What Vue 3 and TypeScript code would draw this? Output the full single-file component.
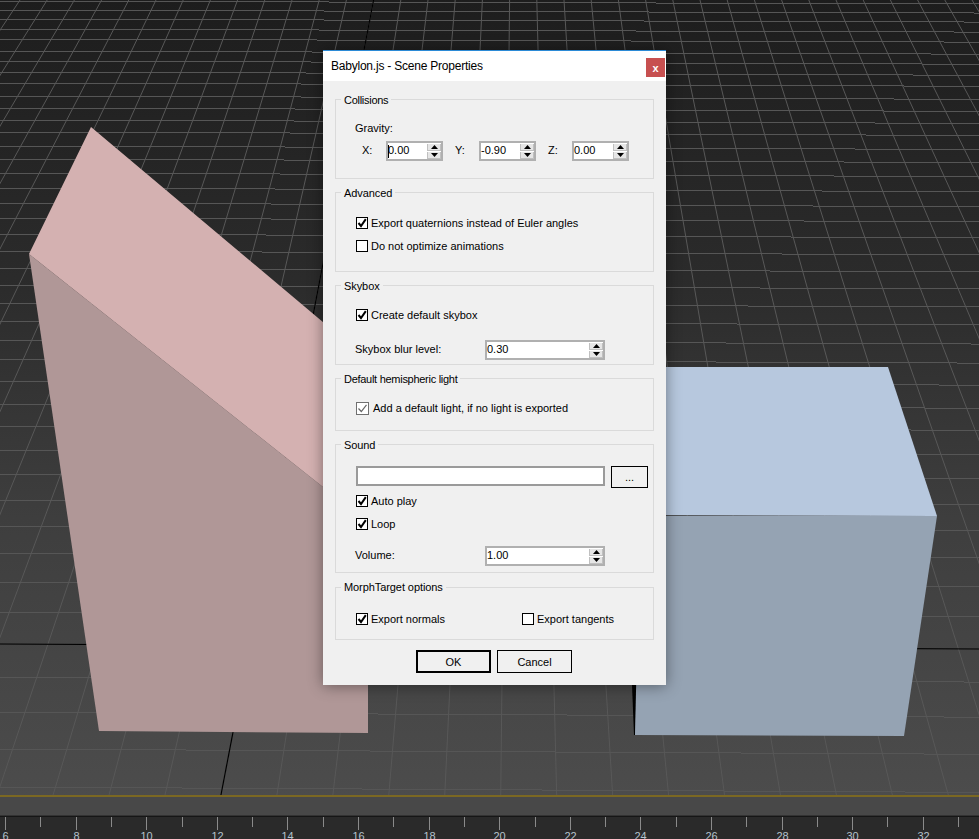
<script setup lang="ts">
const axes = [
  { label: 'X:', value: '0.00', caret: true },
  { label: 'Y:', value: '-0.90', caret: false },
  { label: 'Z:', value: '0.00', caret: false },
]

// viewport floor grid: everything runs to one vanishing point above the frame
const vpX = 518
const vpDepth = 752
const floorBottom = 795

const gridRays = Array.from({ length: 60 }, (_, i) => {
  const x0 = 20 + 27.2 * (i - 18)
  return { x1: x0, x2: vpX + ((x0 - vpX) * (floorBottom + vpDepth)) / vpDepth }
})

const rowYs = [
  1, 10, 19, 29, 39, 51, 61, 72, 83, 96, 108, 120, 132, 146, 159, 173, 188, 203, 218, 234, 251, 268,
  285, 303, 321, 340, 359, 381, 404, 426, 450, 474, 500, 526, 553, 582, 612, 677, 712, 749, 787,
]
const gridRows = rowYs.map((y) => ({ y1: y, y2: y + 3 + (2 * y) / 650 }))

const ticks = Array.from({ length: 28 }, (_, i) => ({
  x: Math.round(5 + 35.3 * i) + 0.5,
  major: i % 2 === 0,
  label: String(6 + i),
}))
</script>

<template>
  <div class="viewport">
    <svg class="scene" width="979" height="795" viewBox="0 0 979 795">
      <defs>
        <linearGradient id="floor" x1="0" y1="0" x2="0" y2="1">
          <stop offset="0" stop-color="#1d1d1d" />
          <stop offset="0.35" stop-color="#2b2b2b" />
          <stop offset="0.65" stop-color="#3e3e3e" />
          <stop offset="1" stop-color="#4c4c4c" />
        </linearGradient>
      </defs>
      <rect width="979" height="795" fill="url(#floor)" />
      <g stroke="#565656" stroke-width="1" shape-rendering="crispEdges">
        <line v-for="r in gridRows" :key="r.y1" x1="0" :y1="r.y1" x2="979" :y2="r.y2" />
      </g>
      <g stroke="#585858" stroke-width="1">
        <line v-for="r in gridRays" :key="r.x1" :x1="r.x1" y1="0" :x2="r.x2" :y2="floorBottom" />
      </g>
      <g stroke="#000" stroke-width="1.2">
        <line x1="0" y1="644" x2="979" y2="649" />
        <line x1="373.6" y1="0" :x2="vpX + ((373.6 - vpX) * (floorBottom + vpDepth)) / vpDepth" :y2="floorBottom" />
      </g>
      <polygon points="632,685 637,685 635,735 634,735" fill="#000" />
      <!-- pink wedge -->
      <polygon points="29,254 323,487 368,525 368,733 99,731" fill="#b09797" />
      <polygon points="91,127 29,254 323,487 368,525 368,360" fill="#d4b1b1" />
      <!-- blue box -->
      <polygon points="640,516 937,516 904,736 635,735" fill="#95a3b3" />
      <polygon points="640,367 888,367 937,516 640,515" fill="#b7c8de" />
    </svg>
    <div class="track"></div>
    <svg class="ruler" width="979" height="23" viewBox="0 0 979 23">
      <line x1="0" y1="0.5" x2="979" y2="0.5" stroke="#161616" />
      <g v-for="t in ticks" :key="t.x">
        <line :x1="t.x" y1="1" :x2="t.x" :y2="t.major ? 14 : 11" stroke="#8a8a8a" />
        <text v-if="t.major" :x="t.x" y="24" class="tick-label">{{ t.label }}</text>
      </g>
    </svg>

    <div class="dialog">
      <div class="titlebar">
        <span class="title">Babylon.js - Scene Properties</span>
        <button class="close">x</button>
      </div>
      <div class="body">
        <fieldset class="group collisions">
          <legend>Collisions</legend>
          <div class="gravity">Gravity:</div>
          <div class="axes">
            <div v-for="a in axes" :key="a.label" class="axis">
              <span class="axis-label">{{ a.label }}</span>
              <div class="number short">
                <span class="value"><i v-if="a.caret" class="caret"></i>{{ a.value }}</span>
                <div class="spin">
                  <span class="spin-btn"><svg width="7" height="4" viewBox="0 0 7 4"><path d="M3.5 0L7 4H0z" /></svg></span>
                  <span class="spin-btn"><svg width="7" height="4" viewBox="0 0 7 4"><path d="M0 0H7L3.5 4z" /></svg></span>
                </div>
              </div>
            </div>
          </div>
        </fieldset>

        <fieldset class="group advanced">
          <legend>Advanced</legend>
          <label class="check">
            <span class="box"><svg width="10" height="10" viewBox="0 0 10 10"><path d="M1.5 5L4 8L8.8 1.2" /></svg></span>
            Export quaternions instead of Euler angles
          </label>
          <label class="check second">
            <span class="box"></span>
            Do not optimize animations
          </label>
        </fieldset>

        <fieldset class="group skybox">
          <legend>Skybox</legend>
          <label class="check">
            <span class="box"><svg width="10" height="10" viewBox="0 0 10 10"><path d="M1.5 5L4 8L8.8 1.2" /></svg></span>
            Create default skybox
          </label>
          <div class="field-row blur">
            <span class="field-label">Skybox blur level:</span>
            <div class="number wide">
              <span class="value">0.30</span>
              <div class="spin">
                <span class="spin-btn"><svg width="7" height="4" viewBox="0 0 7 4"><path d="M3.5 0L7 4H0z" /></svg></span>
                <span class="spin-btn"><svg width="7" height="4" viewBox="0 0 7 4"><path d="M0 0H7L3.5 4z" /></svg></span>
              </div>
            </div>
          </div>
        </fieldset>

        <fieldset class="group hemi">
          <legend>Default hemispheric light</legend>
          <label class="check soft">
            <span class="box"><svg width="11" height="11" viewBox="0 0 11 11"><path d="M1.5 5.5L4.3 8.5L9.5 1.8" /></svg></span>
            Add a default light, if no light is exported
          </label>
        </fieldset>

        <fieldset class="group sound">
          <legend>Sound</legend>
          <div class="file-row">
            <div class="file-input"></div>
            <button class="browse">...</button>
          </div>
          <label class="check autoplay">
            <span class="box"><svg width="10" height="10" viewBox="0 0 10 10"><path d="M1.5 5L4 8L8.8 1.2" /></svg></span>
            Auto play
          </label>
          <label class="check second">
            <span class="box"><svg width="10" height="10" viewBox="0 0 10 10"><path d="M1.5 5L4 8L8.8 1.2" /></svg></span>
            Loop
          </label>
          <div class="field-row volume">
            <span class="field-label">Volume:</span>
            <div class="number wide">
              <span class="value">1.00</span>
              <div class="spin">
                <span class="spin-btn"><svg width="7" height="4" viewBox="0 0 7 4"><path d="M3.5 0L7 4H0z" /></svg></span>
                <span class="spin-btn"><svg width="7" height="4" viewBox="0 0 7 4"><path d="M0 0H7L3.5 4z" /></svg></span>
              </div>
            </div>
          </div>
        </fieldset>

        <fieldset class="group morph">
          <legend>MorphTarget options</legend>
          <div class="morph-row">
            <label class="check normals">
              <span class="box"><svg width="10" height="10" viewBox="0 0 10 10"><path d="M1.5 5L4 8L8.8 1.2" /></svg></span>
              Export normals
            </label>
            <label class="check">
              <span class="box"></span>
              Export tangents
            </label>
          </div>
        </fieldset>

        <div class="actions">
          <button class="btn default">OK</button>
          <button class="btn">Cancel</button>
        </div>
      </div>
    </div>
  </div>
</template>

<style scoped>
.viewport {
  position: relative;
  width: 979px;
  height: 839px;
  overflow: hidden;
  background: #2a2a2a;
}
.scene, .ruler { display: block; }
.track {
  height: 21px;
  box-sizing: border-box;
  background: #484848;
  border-top: 2px solid #7b6822;
  border-bottom: 1px solid #333;
}
.ruler { background: #2a2a2a; }
.tick-label {
  font-family: "Liberation Sans", Arial, sans-serif;
  font-size: 11px;
  fill: #b4c2cc;
  text-anchor: middle;
}

.dialog {
  position: absolute;
  left: 323px;
  top: 50px;
  width: 343px;
  height: 635px;
  box-sizing: border-box;
  background: #f0f0f0;
  border-top: 1px solid #2b8ad6;
  box-shadow: 0 1px 14px rgba(0, 0, 0, 0.42);
  font-family: "Liberation Sans", Arial, sans-serif;
  font-size: 11px;
  color: #000;
}
.titlebar {
  height: 30px;
  background: #fff;
  display: flex;
  align-items: center;
  justify-content: space-between;
  padding: 0 1px 0 8px;
}
.title { font-size: 12px; letter-spacing: -0.22px; }
.close {
  width: 19px;
  height: 19px;
  margin-top: 3px;
  padding: 0;
  border: 0;
  background: #c75050;
  color: #fff;
  font: bold 11px "Liberation Sans", Arial, sans-serif;
}
.body {
  padding: 11px 12px 0;
  display: flex;
  flex-direction: column;
}
.group {
  margin: 0 0 6px;
  padding: 0 0 0 20px;
  box-sizing: border-box;
  min-width: 0;
  border: 1px solid #dadada;
  line-height: 14px;
}
.group legend {
  margin-left: -15px;
  padding: 0 3px;
  height: 14px;
  line-height: 16px;
  letter-spacing: -0.08px;
}
.collisions { height: 87px; }
.advanced { height: 87px; padding-top: 17px; }
.skybox { height: 87px; padding-top: 16px; }
.hemi { height: 60px; padding-top: 16px; }
.sound { height: 136px; padding-top: 15px; margin-bottom: 7px; }
.morph { height: 60px; padding-top: 18px; margin-bottom: 0; }
.collisions legend, .hemi legend { letter-spacing: -0.28px; }
.morph legend { line-height: 14px; }

.gravity { margin: 15px 0 0 -1px; }
.axes { display: flex; margin-top: 6px; padding-left: 6px; gap: 12px; }
.axis { display: flex; align-items: center; }
.axis-label { width: 24px; margin-top: -3px; }

.number {
  display: flex;
  height: 20px;
  box-sizing: border-box;
  border: 2px solid #b0b0b0;
  background: #fff;
}
.number.short { width: 57px; }
.number.wide { width: 120px; }
.value {
  flex: 1;
  display: flex;
  align-items: center;
  padding-bottom: 2px;
  line-height: 14px;
}
.caret { width: 1px; height: 13px; background: #000; margin-right: -1px; margin-top: 2px; }
.spin { width: 14px; display: flex; flex-direction: column; gap: 1px; padding-top: 1px; }
.spin-btn {
  height: 7px;
  box-sizing: border-box;
  display: flex;
  align-items: center;
  justify-content: center;
  background: #e6e6e6;
  border: 1px solid #c0c0c0;
  border-top-width: 0;
}
.spin-btn svg { display: block; }
.spin-btn path { fill: #000; }

.check { display: flex; align-items: center; gap: 3px; height: 14px; }
.check.second { margin-top: 9px; }
.box {
  width: 12px;
  height: 12px;
  box-sizing: border-box;
  flex: none;
  border: 1px solid #000;
  background: #fff;
  display: flex;
  align-items: center;
  justify-content: center;
}
.box path { fill: none; stroke: #000; stroke-width: 2; }
.check.soft { gap: 4px; }
.check.soft .box { width: 13px; height: 13px; border-color: #707070; }
.check.soft .box path { stroke: #666; stroke-width: 1.2; }

.field-row { display: flex; align-items: center; margin-left: -1px; }
.field-label { width: 130px; margin-top: -2px; }
.field-row.blur { margin-top: 18px; }
.field-row.volume { margin-top: 15px; }

.file-row { display: flex; gap: 6px; align-items: flex-start; }
.file-input {
  width: 249px;
  height: 20px;
  box-sizing: border-box;
  border: 2px solid #9a9a9a;
  background: #fff;
}
.browse {
  width: 37px;
  height: 22px;
  padding: 0;
  border: 1px solid #000;
  background: #f0f0f0;
  font: 11px "Liberation Sans", Arial, sans-serif;
}
.autoplay { margin-top: 6px; }

.morph-row { display: flex; }
.normals { width: 166px; }

.actions { display: flex; justify-content: center; gap: 6px; margin-top: 10px; padding-right: 1px; }
.btn {
  width: 75px;
  height: 23px;
  padding: 0;
  box-sizing: border-box;
  border: 1px solid #000;
  background: #f0f0f0;
  color: #000;
  font: 11px "Liberation Sans", Arial, sans-serif;
}
.btn.default { border-width: 2px; }
</style>

<style>
html, body { margin: 0; background: #2a2a2a; }
</style>
